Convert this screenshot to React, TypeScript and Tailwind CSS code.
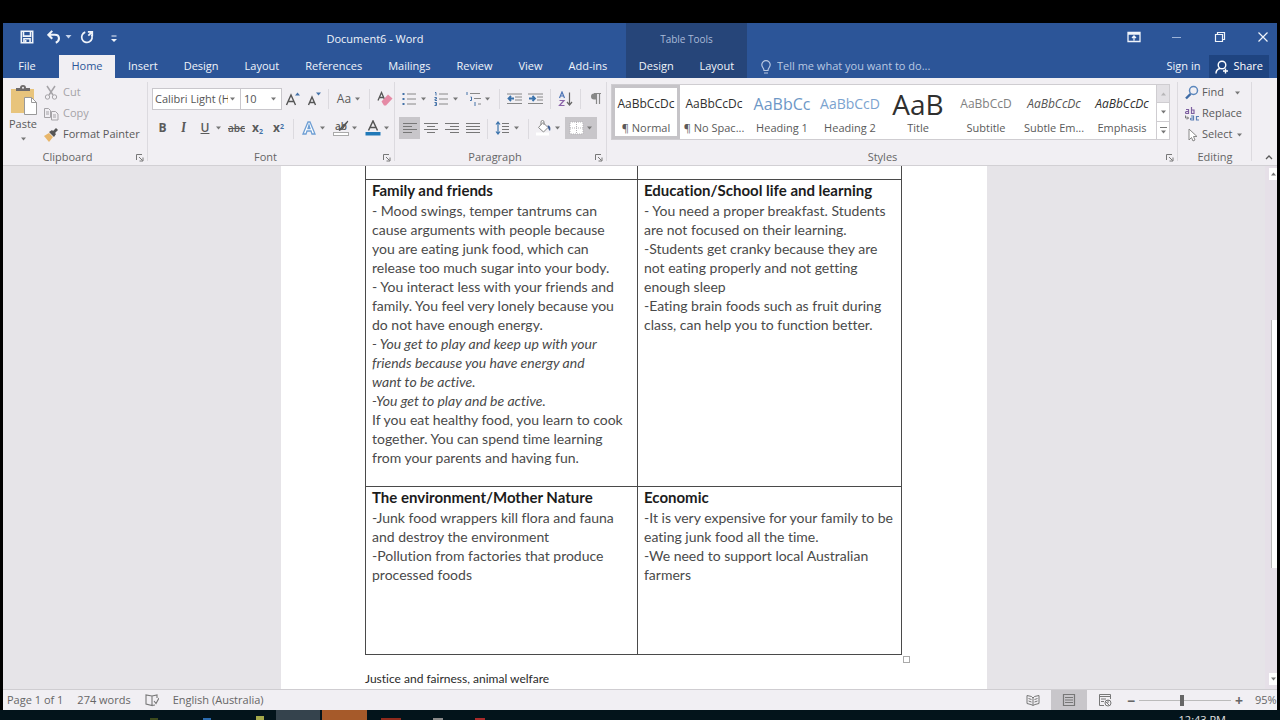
import { useState } from "react"
import type { ReactNode } from "react"
import clsx from "clsx"

const TABS = ["Insert", "Design", "Layout", "References", "Mailings", "Review", "View", "Add-ins"]

const STYLES = [
  { name: "¶ Normal", text: "AaBbCcDc", sample: "text-[12px] text-[#2f2f2f]" },
  { name: "¶ No Spac...", text: "AaBbCcDc", sample: "text-[12px] text-[#2f2f2f]" },
  { name: "Heading 1", text: "AaBbCc", sample: "text-[16px] text-[#6d97c6]" },
  { name: "Heading 2", text: "AaBbCcD", sample: "text-[14px] text-[#7ba3cf]" },
  { name: "Title", text: "AaB", sample: "text-[28px] text-[#2f2f2f]" },
  { name: "Subtitle", text: "AaBbCcD", sample: "text-[12px] text-[#808080]" },
  { name: "Subtle Em...", text: "AaBbCcDc", sample: "text-[12px] italic text-[#555555]" },
  { name: "Emphasis", text: "AaBbCcDc", sample: "text-[12px] italic text-[#2f2f2f]" },
]

const FAMILY = [
  "- Mood swings, temper tantrums can",
  "cause arguments with people because",
  "you are eating junk food, which can",
  "release too much sugar into your body.",
  "- You interact less with your friends and",
  "family. You feel very lonely because you",
  "do not have enough energy.",
]
const FAMILY_ITALIC = [
  "- You get to play and keep up with your",
  "friends because you have energy and",
  "want to be active.",
  "-You get to play and be active.",
]
const FAMILY_END = [
  "If you eat healthy food, you learn to cook",
  "together. You can spend time learning",
  "from your parents and having fun.",
]
const EDUCATION = [
  "- You need a proper breakfast. Students",
  "are not focused on their learning.",
  "-Students get cranky because they are",
  "not eating properly and not getting",
  "enough sleep",
  "-Eating brain foods such as fruit during",
  "class, can help you to function better.",
]
const ENVIRONMENT = [
  "-Junk food wrappers kill flora and fauna",
  "and destroy the environment",
  "-Pollution from factories that produce",
  "processed foods",
]
const ECONOMIC = [
  "-It is very expensive for your family to be",
  "eating junk food all the time.",
  "-We need to support local Australian",
  "farmers",
]

function Svg({ children, className = "size-4", box = "0 0 16 16" }: { children: ReactNode; className?: string; box?: string }) {
  return (
    <svg viewBox={box} className={clsx("shrink-0", className)} fill="none" stroke="currentColor" aria-hidden="true">
      {children}
    </svg>
  )
}

function Caret({ className }: { className?: string }) {
  return (
    <svg viewBox="0 0 7 4" className={clsx("h-1 w-[7px] shrink-0", className)} aria-hidden="true">
      <path d="M1 0.5h5L3.5 3.5z" fill="#777" />
    </svg>
  )
}

function Sep() {
  return <span className="mx-1 h-5 w-px shrink-0 bg-[#dcdadf]" />
}

function Tool({ label, children, split, active }: { label: string; children: ReactNode; split?: boolean; active?: boolean }) {
  return (
    <button
      type="button"
      aria-label={label}
      aria-pressed={active}
      className={clsx(
        "flex h-[22px] shrink-0 items-center",
        split ? "w-8 gap-0.5 pl-[3px]" : "w-[21px] justify-center",
        active ? "bg-[#c8c6ca]" : "hover:bg-[#dddbe0]"
      )}
    >
      {children}
      {split && <Caret />}
    </button>
  )
}

function Launcher({ label }: { label: string }) {
  return (
    <button type="button" aria-label={label} className="absolute right-1 bottom-[3px] text-[#777]">
      <Svg className="size-2" box="0 0 8 8">
        <path d="M0.5 6V0.5H6M3 3l3.5 3.5M7 3.5V7H3.5" />
      </Svg>
    </button>
  )
}

function Group({ title, className, launcher, children }: { title: string; className?: string; launcher?: boolean; children: ReactNode }) {
  return (
    <section className={clsx("relative flex shrink-0 flex-col", className)}>
      <div className="flex-1">{children}</div>
      <h2 className={clsx("h-4 text-center text-[11px] leading-4 text-[#666]", launcher && "pr-4")}>{title}</h2>
      {launcher && <Launcher label={title + " settings"} />}
      <span className="absolute top-1 right-0 bottom-1 w-px bg-[#dcdadf]" />
    </section>
  )
}

function Lines({ items, italic }: { items: string[]; italic?: boolean }) {
  return (
    <p className={clsx("text-[14px] leading-[19px] whitespace-nowrap", italic && "italic")}>
      {items.map((line) => (
        <span key={line} className="block">{line}</span>
      ))}
    </p>
  )
}

function AlignIcon({ rows }: { rows: string }) {
  return (
    <Svg>
      <path d={rows} stroke="#777" />
    </Svg>
  )
}

function TitleBar() {
  return (
    <header className="flex h-[55px] shrink-0 bg-[#2c5598] text-[#f0f4fa]">
      <div className="flex w-[623px] shrink-0 flex-col">
        <div className="flex h-8 items-center">
          <div className="flex w-[248px] items-center pb-1 pl-[17px]">
            <button type="button" aria-label="Save">
              <Svg className="size-[14px]">
                <path d="M1.5 1.5h13v13h-13zM4 2v5h8V2M4.500 14v-4h7v4M6.500 11.500V14" strokeWidth="1.800" />
              </Svg>
            </button>
            <button type="button" aria-label="Undo" className="ml-[13px] flex items-center gap-1">
              <Svg className="size-[14px]">
                <path d="M6 1L1.500 5.500l4.500 4.500M2 5.500H9c6 0 6 7 1 9" strokeWidth="2.400" />
              </Svg>
              <svg viewBox="0 0 7 4" className="h-1 w-[7px]" aria-hidden="true"><path d="M0.500 0h6L3.500 3.500z" fill="#c5d3ea" /></svg>
            </button>
            <button type="button" aria-label="Repeat" className="ml-2">
              <Svg className="size-[14px]">
                <path d="M6 2.500A6 6 0 1 0 13 5M9 2h5v5M13.500 2.500L9.500 6.500" strokeWidth="2" />
              </Svg>
            </button>
            <button type="button" aria-label="Customize Quick Access Toolbar" className="ml-4 pt-1">
              <Svg className="size-2" box="0 0 8 8">
                <path d="M1.500 1h5" />
                <path d="M1 4h6L4 7z" fill="currentColor" stroke="none" />
              </Svg>
            </button>
          </div>
          <h1 className="w-[248px] text-center">Document6 - Word</h1>
        </div>
        <nav className="flex h-[23px] items-center whitespace-nowrap">
          <button type="button" className="w-12 shrink-0 text-center">File</button>
          <button type="button" className="ml-2 h-full w-14 shrink-0 bg-[#f1eff3] text-[#2c5598]">Home</button>
          {TABS.map((tab) => (
            <button key={tab} type="button" className="h-full shrink-0 px-[13px]">{tab}</button>
          ))}
        </nav>
      </div>
      <div className="flex w-[121px] shrink-0 flex-col bg-[#264579]">
        <p className="flex h-8 items-center justify-center text-[10px] text-[#a9bad8]">Table Tools</p>
        <div className="flex h-[23px]">
          <button type="button" className="flex-1">Design</button>
          <button type="button" className="flex-1">Layout</button>
        </div>
      </div>
      <div className="flex min-w-0 flex-1 flex-col">
        <div className="flex h-8 items-center justify-end gap-[29px] pr-[7px] pb-1">
          <button type="button" aria-label="Ribbon Display Options">
            <Svg className="h-3 w-[14px]" box="0 0 14 12">
              <path d="M1 1.500h12v9H1zM1 3h12M7 9.500v-4M5 7l2-2 2 2" strokeWidth="1.300" />
            </Svg>
          </button>
          <button type="button" aria-label="Minimize">
            <Svg className="h-3 w-[14px]" box="0 0 14 12">
              <path d="M2 6.500h9" stroke="#9db3d8" />
            </Svg>
          </button>
          <button type="button" aria-label="Restore">
            <Svg className="h-3 w-[14px]" box="0 0 14 12">
              <path d="M2.500 3.500h7v7h-7zM4.500 3.500v-2h7v7h-2" strokeWidth="1.200" />
            </Svg>
          </button>
          <button type="button" aria-label="Close">
            <Svg className="h-3 w-[14px]" box="0 0 14 12">
              <path d="M2.500 1.500l9 9M11.500 1.500l-9 9" strokeWidth="1.200" />
            </Svg>
          </button>
        </div>
        <div className="flex h-[23px] items-center">
          <label className="flex min-w-0 flex-1 items-center gap-1 pl-3 text-[#b9c8e2]">
            <Svg className="size-[14px]" box="0 0 14 14">
              <path d="M5 10.500C5 8 2.800 7.500 2.800 4.800a4.200 4.200 0 0 1 8.400 0C11.200 7.500 9 8 9 10.500zM5 13h4" strokeWidth="1.200" />
            </Svg>
            <span className="sr-only">Tell me</span>
            <input type="text" placeholder="Tell me what you want to do..." className="w-full bg-transparent outline-none placeholder:text-[#b9c8e2]" />
          </label>
          <button type="button" className="px-[9px]">Sign in</button>
          <button type="button" className="mr-2 flex h-full items-center gap-1 bg-[#1f4480] px-[6px] text-white">
            <Svg className="size-[14px]" box="0 0 14 14">
              <circle cx="7" cy="5" r="3.800" strokeWidth="1.400" />
              <path d="M1 13.500c0-3 2-4.500 4-5M10.500 8.500v5M8 11h5" strokeWidth="1.400" />
            </Svg>
            Share
          </button>
        </div>
      </div>
    </header>
  )
}

function ClipboardGroup() {
  return (
    <Group title="Clipboard" launcher className="w-[145px]">
      <div className="flex whitespace-nowrap">
        <button type="button" className="flex w-10 flex-col items-center pt-[7px]">
          <svg viewBox="0 0 28 30" className="h-[30px] w-7" aria-hidden="true">
            <path d="M2 4h23v24H2z" fill="#e8c47c" />
            <path d="M7 6V3h4a3 3 0 0 1 6 0h4v3z" fill="#6e6a6a" />
            <circle cx="14" cy="2.800" r="1" fill="#f1eff3" />
            <path d="M15.500 12.500h7l5 5v12h-12z" fill="#fff" stroke="#999" />
            <path d="M22.500 12.500v5h5" fill="none" stroke="#999" />
          </svg>
          <span className="leading-[18px]">Paste</span>
          <Caret className="mt-1" />
        </button>
        <div className="flex flex-col pt-1">
          <button type="button" className="flex h-[21px] items-center gap-1 text-[#a5a3a7]">
            <Svg>
              <path d="M4 1l6 9M12 1L6 10" strokeWidth="1.500" />
              <circle cx="4.500" cy="12" r="2.200" />
              <circle cx="11.500" cy="12" r="2.200" />
            </Svg>
            Cut
          </button>
          <button type="button" className="flex h-[21px] items-center gap-1 text-[#a5a3a7]">
            <Svg>
              <path d="M1.500 2.500h4l2 2v7h-6zM3 6h3M3 8h3" />
              <path d="M8.500 5.500h4l2.500 2.500v6H8.500zM10 9h3M10 11h3" />
            </Svg>
            Copy
          </button>
          <button type="button" className="flex h-[21px] items-center gap-1">
            <Svg>
              <path d="M1 9l5-3 4 4-4 5z" fill="#e8b66a" stroke="none" />
              <path d="M6 5l3-2 4 4-2 3zM10 4l3-3 2 2-3 3z" fill="#555" stroke="none" />
            </Svg>
            Format Painter
          </button>
        </div>
      </div>
    </Group>
  )
}

function FontGroup() {
  return (
    <Group title="Font" launcher className="w-[247px] pl-1">
      <div className="flex h-8 items-center pt-[10px]">
        <label className="relative flex h-[22px] w-[89px] shrink-0 border border-[#c9c7cc] bg-white">
          <span className="sr-only">Font</span>
          <select className="w-[75px] appearance-none overflow-hidden bg-white pl-0.5 text-[11px] text-[#555] outline-none">
            <option>Calibri Light (Headings)</option>
          </select>
          <Caret className="absolute top-2 right-1" />
        </label>
        <label className="relative -ml-px flex h-[22px] w-[42px] shrink-0 border border-[#c9c7cc] bg-white">
          <span className="sr-only">Font size</span>
          <select className="w-full appearance-none bg-white pl-[3px] text-[11px] text-[#555] outline-none">
            <option>10</option>
          </select>
          <Caret className="absolute top-2 right-1" />
        </label>
        <Tool label="Increase font size">
          <Svg>
            <path d="M1.500 14L6 4l4.500 10M3 10.500h6" stroke="#555" strokeWidth="1.400" />
            <path d="M10 4.500L12.500 1.500 15 4.500z" fill="#4472a8" stroke="none" />
          </Svg>
        </Tool>
        <Tool label="Decrease font size">
          <Svg>
            <path d="M2.500 14L6 6l3.500 8M4 11.500h4.500" stroke="#555" strokeWidth="1.400" />
            <path d="M10 1.500h5L12.500 4.500z" fill="#4472a8" stroke="none" />
          </Svg>
        </Tool>
        <Sep />
        <Tool label="Change case" split>
          <span className="w-4 text-[12px]">Aa</span>
        </Tool>
        <Sep />
        <Tool label="Clear formatting">
          <Svg>
            <path d="M1 9.500L4.500 1.500 8 9.500M2.500 6.500h4" stroke="#555" strokeWidth="1.300" />
            <path d="M4.500 10.500l6.500-7 4.500 4-6.500 7h-2z" fill="#e58aa5" stroke="none" />
          </Svg>
        </Tool>
      </div>
      <div className="flex h-[29px] items-end">
        <Tool label="Bold"><b className="text-[12px]">B</b></Tool>
        <Tool label="Italic"><i className="font-serif text-[13px] font-bold">I</i></Tool>
        <Tool label="Underline" split><span className="w-4 text-center text-[12px] font-semibold underline">U</span></Tool>
        <Tool label="Strikethrough"><s className="text-[10px] font-semibold">abc</s></Tool>
        <Tool label="Subscript"><span className="text-[12px] font-bold">x<sub className="text-[7px] text-[#4472a8]">2</sub></span></Tool>
        <Tool label="Superscript"><span className="text-[12px] font-bold">x<sup className="text-[7px] text-[#4472a8]">2</sup></span></Tool>
        <Sep />
        <Tool label="Text effects" split>
          <Svg>
            <path d="M2 14L7 2h2l5 12h-3l-1-3H6l-1 3zM7 8.500h2L8 5z" fill="#fff" stroke="#6f9fd4" strokeWidth="1.300" />
          </Svg>
        </Tool>
        <Tool label="Text highlight" split>
          <span className="flex w-4 flex-col text-[10px] leading-[10px] font-semibold">
            <span className="relative">
              ab
              <svg viewBox="0 0 10 10" className="absolute -top-px right-0 size-[11px]" aria-hidden="true"><path d="M9 1L3 7 1 9.500 4 8z" fill="#777" stroke="#555" /></svg>
            </span>
            <span className="mt-px h-1 border border-[#aaa] bg-white" />
          </span>
        </Tool>
        <Tool label="Font color" split>
          <Svg>
            <path d="M3.500 10.500L8 1l4.500 9.500M5 7.500h6" stroke="#555" strokeWidth="1.500" />
            <path d="M0.500 12h15v3.500h-15z" fill="#2079b8" stroke="none" />
          </Svg>
        </Tool>
      </div>
    </Group>
  )
}

function ParagraphGroup() {
  return (
    <Group title="Paragraph" launcher className="w-[212px] pl-1">
      <div className="flex h-8 items-center pt-[10px]">
        <Tool label="Bullets" split>
          <Svg>
            <path d="M5 3h9M5 8h9M5 13h9" stroke="#888" />
            <path d="M0.500 2h2v2h-2zM0.500 7h2v2h-2zM0.500 12h2v2h-2z" fill="#4472a8" stroke="none" />
          </Svg>
        </Tool>
        <Tool label="Numbering" split>
          <Svg>
            <path d="M5 3h9M5 8h9M5 13h9" stroke="#888" />
            <path d="M1 1.500h1v3M0.500 6.500h2v1.500h-1.500v1.500h2M0.500 11.500h2v3h-2M1 13h1.500" stroke="#4472a8" />
          </Svg>
        </Tool>
        <Tool label="Multilevel list" split>
          <Svg>
            <path d="M4 2.500h10M8 7.500h7M12 13h3" stroke="#888" />
            <path d="M1 1v3M4.500 6h1v3.500h-1.500M9 11v4" stroke="#4472a8" />
          </Svg>
        </Tool>
        <Sep />
        <Tool label="Decrease indent">
          <Svg>
            <path d="M0 3h15M8 6h7M8 9h7M0 12.500h15" stroke="#888" />
            <path d="M7 7.500H1.500M4 5L1.500 7.500 4 10" stroke="#3a72ab" strokeWidth="1.800" />
          </Svg>
        </Tool>
        <Tool label="Increase indent">
          <Svg>
            <path d="M0 3h15M9 6h6M9 9h6M0 12.500h15" stroke="#888" />
            <path d="M1 7.500h6M4.500 5L7 7.500 4.500 10" stroke="#3a72ab" strokeWidth="1.800" />
          </Svg>
        </Tool>
        <Sep />
        <Tool label="Sort">
          <Svg>
            <path d="M1.500 7L4 1l2.500 6M2.500 5h3" stroke="#4d74b5" strokeWidth="1.200" />
            <path d="M1.500 9.500h4.500L1.500 14.500h5" stroke="#8a63a8" strokeWidth="1.200" />
            <path d="M11.500 1.500v12M9 11l2.500 3 2.500-3" stroke="#666" strokeWidth="1.200" />
          </Svg>
        </Tool>
        <Sep />
        <Tool label="Show paragraph marks">
          <Svg>
            <path d="M8 2.500H6a3 3 0 0 0 0 6H8z" fill="#888" stroke="none" />
            <path d="M8.500 2.500V13M11.500 2.500V13M6 2.500h7" stroke="#888" strokeWidth="1.200" />
          </Svg>
        </Tool>
      </div>
      <div className="flex h-[29px] items-end">
        <Tool label="Align left" active><AlignIcon rows="M1 3.500h14M1 6.500h9M1 9.500h14M1 12.500h9" /></Tool>
        <Tool label="Center"><AlignIcon rows="M1 3.500h14M4 6.500h8M1 9.500h14M4 12.500h8" /></Tool>
        <Tool label="Align right"><AlignIcon rows="M1 3.500h14M6 6.500h9M1 9.500h14M6 12.500h9" /></Tool>
        <Tool label="Justify"><AlignIcon rows="M1 3.500h14M1 6.500h14M1 9.500h14M1 12.500h14" /></Tool>
        <Sep />
        <Tool label="Line spacing" split>
          <Svg>
            <path d="M7 3.500h7M7 6.500h7M7 9.500h7M7 12.500h7" stroke="#777" />
            <path d="M3 2v12M1 4.500L3 2l2 2.500M1 11.500L3 14l2-2.500" stroke="#3a72ab" strokeWidth="1.200" />
          </Svg>
        </Tool>
        <Sep />
        <Tool label="Shading" split>
          <Svg>
            <path d="M0 12.500h13v3H0z" fill="#fff" stroke="none" />
            <path d="M7 2.500l5 5-4.500 4.500-5-4.500zM5 5V2a1.500 1.500 0 0 1 3 0v3" fill="#fff" stroke="#888" />
            <path d="M11.500 5.500c2.500 0 3.500 2 2.500 5.500-1.500-1-2-3-2.500-5.500z" fill="#3f5f94" stroke="none" />
          </Svg>
        </Tool>
        <Tool label="Borders" split active>
          <Svg>
            <path d="M2 2h13v12H2z" fill="#fff" stroke="none" />
            <path d="M2 2h13v12H2zM8.500 2v12M2 8h13" stroke="#b5b3b7" strokeDasharray="1 1" />
          </Svg>
        </Tool>
      </div>
    </Group>
  )
}

function StylesGroup() {
  const [current, setCurrent] = useState("¶ Normal")
  return (
    <Group title="Styles" launcher className="w-[571px] pr-2 pl-1">
      <div className="mt-1.5 flex h-[56px] border border-[#cfcdd1] bg-white">
        {STYLES.map((style) => (
          <button
            key={style.name}
            type="button"
            onClick={() => setCurrent(style.name)}
            className={clsx(
              "flex min-w-0 flex-1 flex-col items-center border-[3px]",
              style.name === current ? "border-[#c6c4c8]" : "border-transparent"
            )}
          >
            <span className={clsx("h-8 leading-8 whitespace-nowrap", style.sample)}>{style.text}</span>
            <span className="text-[11px] leading-4 whitespace-nowrap">{style.name}</span>
          </button>
        ))}
        <div className="flex w-[13px] flex-col divide-y divide-[#cfcdd1] border-l border-[#cfcdd1]">
          <button type="button" aria-label="Previous styles" className="flex flex-1 items-center justify-center bg-[#e3e1e5]">
            <Caret className="rotate-180 opacity-40" />
          </button>
          <button type="button" aria-label="Next styles" className="flex flex-1 items-center justify-center"><Caret /></button>
          <button type="button" aria-label="More styles" className="flex flex-1 flex-col items-center justify-center gap-0.5">
            <span className="h-px w-[7px] bg-[#777]" />
            <Caret />
          </button>
        </div>
      </div>
    </Group>
  )
}

function EditingGroup() {
  return (
    <Group title="Editing" className="w-[74px]">
      <div className="flex flex-col items-start pt-1 pl-1.5">
        <button type="button" className="flex h-[21px] items-center gap-0.5">
          <Svg>
            <circle cx="9.500" cy="5.500" r="4" stroke="#5b87bd" strokeWidth="1.500" />
            <path d="M6.500 9L2 13.500" stroke="#3e6ba5" strokeWidth="2.400" />
          </Svg>
          Find
          <Caret className="ml-2" />
        </button>
        <button type="button" className="flex h-[21px] items-center gap-0.5">
          <Svg>
            <path d="M2 3.500h2.500v4H2.500a1 1 0 0 1 0-2h2M7.500 1v6.500H10v-3.500H7.500" stroke="#7d5fa0" strokeWidth="1.200" />
            <path d="M7 10h2.500v4H7.500a1 1 0 0 1 0-2h2M15 10.500h-2.500v3.500H15" stroke="#5b7fb5" strokeWidth="1.200" />
            <path d="M1.500 9.500v2.500h3M3 10.500L4.500 12 3 13.500" stroke="#777" />
          </Svg>
          Replace
        </button>
        <button type="button" className="flex h-[21px] items-center gap-0.5">
          <Svg>
            <path d="M5 2v11l2.500-2.500L9 14l2-1-1.500-3.500H13z" fill="#fff" stroke="#888" />
          </Svg>
          Select
          <Caret className="ml-0.5" />
        </button>
      </div>
    </Group>
  )
}

function Cell({ title, children }: { title: string; children: ReactNode }) {
  return (
    <td className="border border-[#4a4a4a] p-0 pl-1.5 align-top">
      <h3 className="pb-px text-[15px] leading-5 font-bold whitespace-nowrap text-[#1c1c1c]">{title}</h3>
      {children}
    </td>
  )
}

function Document() {
  return (
    <main className="flex min-h-0 flex-1 bg-[#e6e4e8]">
      <div className="flex min-w-0 flex-1 justify-center overflow-hidden">
        <article className="w-[706px] shrink-0 bg-white pr-[85px] pl-[84px] font-['Lato',sans-serif] text-[#4a4a4a] [font-variant-ligatures:none]">
          <div className="relative">
            <table className="w-full table-fixed border-collapse">
              <colgroup>
                <col className="w-[272px]" />
                <col />
              </colgroup>
              <tbody>
                <tr className="h-[13px]">
                  <td className="border-x border-[#4a4a4a] p-0" />
                  <td className="border-x border-[#4a4a4a] p-0" />
                </tr>
                <tr className="h-[307px]">
                  <Cell title="Family and friends">
                    <Lines items={FAMILY} />
                    <Lines items={FAMILY_ITALIC} italic />
                    <Lines items={FAMILY_END} />
                  </Cell>
                  <Cell title="Education/School life and learning">
                    <Lines items={EDUCATION} />
                  </Cell>
                </tr>
                <tr className="h-[168px]">
                  <Cell title="The environment/Mother Nature">
                    <Lines items={ENVIRONMENT} />
                  </Cell>
                  <Cell title="Economic">
                    <Lines items={ECONOMIC} />
                  </Cell>
                </tr>
              </tbody>
            </table>
            <span className="absolute -right-2 -bottom-2 size-[7px] border border-[#aaa] bg-white" />
          </div>
          <p className="mt-4 text-[12px] leading-4 text-[#2a2a2a]">Justice and fairness, animal welfare</p>
        </article>
      </div>
      <div className="flex w-3 flex-col items-end justify-between bg-[#e6e0e8]">
        <button type="button" aria-label="Scroll up" className="mt-0.5 flex h-3 w-2 items-center justify-center bg-white">
          <Caret className="rotate-180" />
        </button>
        <div className="mt-[140px] mb-auto h-[248px] w-1.5 border-l border-[#bbb] bg-white" />
        <button type="button" aria-label="Scroll down" className="mb-1 flex h-3 w-2 items-center justify-center bg-white">
          <Caret />
        </button>
      </div>
    </main>
  )
}

function StatusBar() {
  return (
    <footer className="flex h-[21px] shrink-0 items-center overflow-hidden border-t border-[#cfcdd1] bg-[#f1eff3] pl-1 text-[11px] text-[#666]">
      <span>Page 1 of 1</span>
      <span className="ml-3.5">274 words</span>
      <Svg className="ml-3.5 size-[14px]" box="0 0 14 14">
        <path d="M7 3L1 2v9l6 1.500zM7 3l5-1v3M7 12.500l3-0.500M9 8l2 2.500L14 5" stroke="#777" strokeWidth="1.100" />
      </Svg>
      <span className="ml-3.5">English (Australia)</span>
      <div className="ml-auto flex h-full items-center">
        <button type="button" aria-label="Read Mode" className="flex h-full w-9 items-center justify-center">
          <Svg className="size-[14px]" box="0 0 14 14">
            <path d="M1 2.500l4.500 1L7 5l1.500-1.500 4.500-1v8l-4 1-2 1-2-1-4-1zM7 5v7M2.500 5.500l3 1M2.500 8l3 1M11.500 5.500l-3 1M11.500 8l-3 1" stroke="#777" />
          </Svg>
        </button>
        <button type="button" aria-label="Print Layout" aria-pressed="true" className="flex h-full w-9 items-center justify-center bg-[#c8c6ca]">
          <Svg className="size-[14px]" box="0 0 14 14">
            <path d="M1.500 1.500h11v11h-11zM3 4.500h8M3 7h8M3 9.500h8" stroke="#777" strokeWidth="1.200" />
          </Svg>
        </button>
        <button type="button" aria-label="Web Layout" className="flex h-full w-9 items-center justify-center">
          <Svg className="size-[14px]" box="0 0 14 14">
            <path d="M6 12.500H1.500v-11h11V6M1.500 3.500h11M3 6h5M3 8.500h3" stroke="#777" />
            <circle cx="10" cy="10" r="3" stroke="#777" />
            <path d="M8 9l3 3M10 7v3" stroke="#777" />
          </Svg>
        </button>
        <button type="button" aria-label="Zoom out" className="w-4 text-center text-[14px] font-bold">−</button>
        <input
          type="range"
          aria-label="Zoom"
          min={0}
          max={100}
          defaultValue={47}
          className="h-3 w-[92px] appearance-none bg-[linear-gradient(#bbb,#bbb)] bg-[length:100%_1px] bg-center bg-no-repeat [&::-webkit-slider-thumb]:h-[11px] [&::-webkit-slider-thumb]:w-1 [&::-webkit-slider-thumb]:appearance-none [&::-webkit-slider-thumb]:bg-[#666]"
        />
        <button type="button" aria-label="Zoom in" className="w-4 text-center text-[14px] font-bold">+</button>
        <span className="ml-2 w-[22px] whitespace-nowrap">95%</span>
      </div>
    </footer>
  )
}

function Taskbar() {
  return (
    <div className="flex h-[10px] shrink-0 overflow-hidden bg-[#03141b]">
      <div className="flex w-[276px] items-end justify-end gap-[45px] pr-3">
        <span className="h-0.5 w-2 bg-[#3c4a1c]" />
        <span className="h-0.5 w-2 bg-[#2b6cb0]" />
        <span className="h-1 w-2 bg-[#a3a84a]" />
      </div>
      <span className="w-11 bg-[#35434d]" />
      <span className="ml-0.5 w-[45px] bg-[#a65a2a]" />
      <div className="flex items-end gap-8 pl-[14px]">
        <span className="h-0.5 w-5 bg-[#8f2a1c]" />
        <span className="h-0.5 w-2.5 bg-[#8a8a8a]" />
        <span className="h-0.5 w-2.5 bg-[#a82a2a]" />
      </div>
      <time className="mt-0.5 mr-[54px] ml-auto text-[11px] leading-4 text-[#e0e0e0]">12:43 PM</time>
    </div>
  )
}

export default function App() {
  return (
    <div className="flex h-screen flex-col overflow-hidden bg-black pt-[23px] font-['Open_Sans',sans-serif] text-[11px] text-[#5a5a5a]">
      <div className="ml-[3px] flex min-h-0 flex-1 flex-col pr-[3px]">
        <TitleBar />
        <div className="flex h-[88px] shrink-0 border-b border-[#d2d0d4] bg-[#f1eff3]">
          <ClipboardGroup />
          <FontGroup />
          <ParagraphGroup />
          <StylesGroup />
          <EditingGroup />
          <button type="button" aria-label="Collapse the Ribbon" className="mt-auto ml-auto p-1">
            <Svg className="size-2" box="0 0 8 8">
              <path d="M1 6l3-3 3 3" strokeWidth="1.300" />
            </Svg>
          </button>
        </div>
        <Document />
        <StatusBar />
      </div>
      <Taskbar />
    </div>
  )
}
